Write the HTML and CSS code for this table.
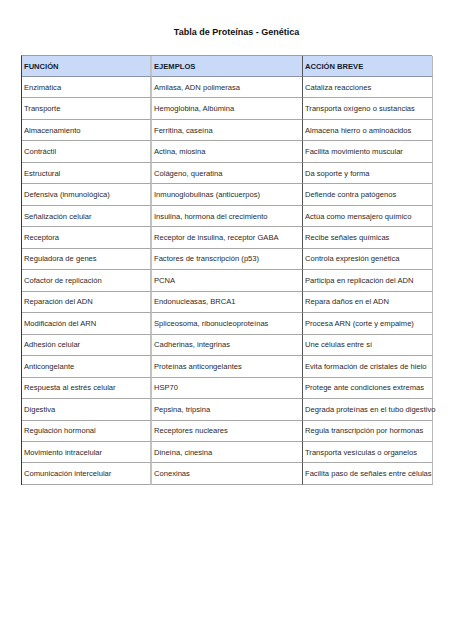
FILE: index.html
```html
<!DOCTYPE html>
<html lang="es">
<head>
<meta charset="utf-8">
<title>Tabla de Proteínas - Genética</title>
<link rel="stylesheet" href="styles.css">
</head>
<body>
<div class="page">
  <h1 class="title">Tabla de Proteínas - Genética</h1>
  <div class="table">
    <div class="cell head c1">FUNCIÓN</div>
    <div class="cell head c2">EJEMPLOS</div>
    <div class="cell head c3">ACCIÓN BREVE</div>

    <div class="cell c1">Enzimática</div><div class="cell c2">Amilasa, ADN polimerasa</div><div class="cell c3">Cataliza reacciones</div>
    <div class="cell c1">Transporte</div><div class="cell c2">Hemoglobina, Albúmina</div><div class="cell c3">Transporta oxígeno o sustancias</div>
    <div class="cell c1">Almacenamiento</div><div class="cell c2">Ferritina, caseína</div><div class="cell c3">Almacena hierro o aminoácidos</div>
    <div class="cell c1">Contráctil</div><div class="cell c2">Actina, miosina</div><div class="cell c3">Facilita movimiento muscular</div>
    <div class="cell c1">Estructural</div><div class="cell c2">Colágeno, queratina</div><div class="cell c3">Da soporte y forma</div>
    <div class="cell c1">Defensiva (inmunológica)</div><div class="cell c2">Inmunoglobulinas (anticuerpos)</div><div class="cell c3">Defiende contra patógenos</div>
    <div class="cell c1">Señalización celular</div><div class="cell c2">Insulina, hormona del crecimiento</div><div class="cell c3">Actúa como mensajero químico</div>
    <div class="cell c1">Receptora</div><div class="cell c2">Receptor de insulina, receptor GABA</div><div class="cell c3">Recibe señales químicas</div>
    <div class="cell c1">Reguladora de genes</div><div class="cell c2">Factores de transcripción (p53)</div><div class="cell c3">Controla expresión genética</div>
    <div class="cell c1">Cofactor de replicación</div><div class="cell c2">PCNA</div><div class="cell c3">Participa en replicación del ADN</div>
    <div class="cell c1">Reparación del ADN</div><div class="cell c2">Endonucleasas, BRCA1</div><div class="cell c3">Repara daños en el ADN</div>
    <div class="cell c1">Modificación del ARN</div><div class="cell c2">Spliceosoma, ribonucleoproteínas</div><div class="cell c3">Procesa ARN (corte y empalme)</div>
    <div class="cell c1">Adhesión celular</div><div class="cell c2">Cadherinas, integrinas</div><div class="cell c3">Une células entre sí</div>
    <div class="cell c1">Anticongelante</div><div class="cell c2">Proteínas anticongelantes</div><div class="cell c3">Evita formación de cristales de hielo</div>
    <div class="cell c1">Respuesta al estrés celular</div><div class="cell c2">HSP70</div><div class="cell c3">Protege ante condiciones extremas</div>
    <div class="cell c1">Digestiva</div><div class="cell c2">Pepsina, tripsina</div><div class="cell c3">Degrada proteínas en el tubo digestivo</div>
    <div class="cell c1">Regulación hormonal</div><div class="cell c2">Receptores nucleares</div><div class="cell c3">Regula transcripción por hormonas</div>
    <div class="cell c1">Movimiento intracelular</div><div class="cell c2">Dineína, cinesina</div><div class="cell c3">Transporta vesículas o organelos</div>
    <div class="cell c1">Comunicación intercelular</div><div class="cell c2">Conexinas</div><div class="cell c3">Facilita paso de señales entre células</div>
  </div>
</div>
</body>
</html>
```

FILE: styles.css
```css
html, body {
  margin: 0;
  padding: 0;
  background: #ffffff;
}

.page {
  width: 453px;
  height: 640px;
  font-family: "Liberation Sans", Arial, sans-serif;
  color: #222222;
}

.title {
  margin: 0;
  padding: 27px 0 17px 20px;
  height: 11px;
  font-size: 9px;
  line-height: 11px;
  font-weight: bold;
  text-align: center;
  color: #111111;
}

.table {
  margin-left: 21px;
  display: grid;
  grid-template-columns: 130px 151px 130px;
  grid-template-rows: 21px;
  grid-auto-rows: 21.47px;
  border-top: 1px solid #9aa0a8;
  border-left: 1px solid #3a3a3a;
  width: 411px;
  box-sizing: border-box;
}

.cell {
  box-sizing: border-box;
  border-bottom: 1px solid #a8a8a8;
  display: flex;
  align-items: center;
  padding-left: 2px;
  font-size: 7.6px;
  white-space: nowrap;
  overflow: visible;
  color: #2a2a2a;
}

.c1 {
  border-right: 2px solid #c2c2c2;
}

.c2 {
  border-right: 1px solid #555555;
}

.c3 {
  border-right: 1px solid #b8b8b8;
}

.head {
  background: #c9daf8;
  font-weight: bold;
  color: #141a2e;
  border-bottom-color: #8a94a6;
}
```
